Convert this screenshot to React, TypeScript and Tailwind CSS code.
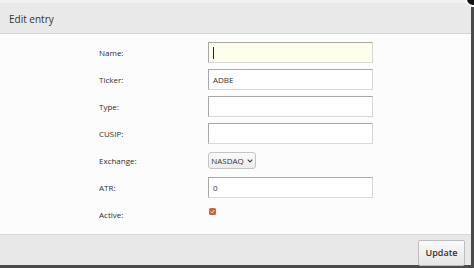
import React from 'react';

const rows = [
  { label: 'Name:', kind: 'text', value: '', focus: true },
  { label: 'Ticker:', kind: 'text', value: 'ADBE' },
  { label: 'Type:', kind: 'text', value: '' },
  { label: 'CUSIP:', kind: 'text', value: '' },
  { label: 'Exchange:', kind: 'select', value: 'NASDAQ' },
  { label: 'ATR:', kind: 'text', value: '0' },
  { label: 'Active:', kind: 'check', value: '' },
];

export default function App() {
  return (
    <div className="relative w-[474px] h-[268px] overflow-hidden bg-[#4a4a4a] font-['Open_Sans',sans-serif]">
      <div className="flex flex-col w-[471px] h-[265px] bg-[#fcfcfc]">
        <div className="h-[3px] bg-[#f1f1f1]" />
        {/* header */}
        <div className="h-[31px] flex items-center px-[9px] pt-[2px] bg-[#e9e9ea] border-b border-[#d4d4d4]">
          <span className="text-[10px] text-[#333]">Edit entry</span>
        </div>

        {/* body */}
        <div className="flex-1 flex flex-col pt-[5px] pl-[99px]">
          {rows.map((r) => (
            <div key={r.label} className="h-[27px] flex items-center">
              <span className="w-[109px] text-[8px] text-[#2e2e2e]">{r.label}</span>
              {r.kind === 'text' && (
                <div
                  className={`w-[165px] h-[21px] flex items-center pl-[4px] border border-[#d8d8d8] border-t-[#a8a8a8] border-l-[#a8a8a8] ${r.focus ? 'bg-[#fefeea]' : 'bg-white'}`}
                >
                  {r.focus ? (
                    <span className="w-px h-[12px] bg-[#222]" />
                  ) : (
                    <span className="text-[8px] text-[#333]">{r.value}</span>
                  )}
                </div>
              )}
              {r.kind === 'select' && (
                <div className="w-[48px] h-[17px] flex items-center justify-center gap-[3px] rounded-[3px] border border-[#c4c4c4] bg-gradient-to-b from-[#fbfbfb] to-[#ececec]">
                  <span className="text-[8px] text-[#333]">{r.value}</span>
                  <svg width="6" height="4" viewBox="0 0 6 4">
                    <path d="M0.7 0.7 L3 3 L5.3 0.7" fill="none" stroke="#444" strokeWidth="1.1" />
                  </svg>
                </div>
              )}
              {r.kind === 'check' && (
                <div className="w-[7px] h-[7px] -mt-[6px] ml-[1px] rounded-[1.5px] bg-[#c8653c] flex items-center justify-center">
                  <svg width="5" height="5" viewBox="0 0 5 5">
                    <path d="M0.8 2.6 L2 3.8 L4.2 1.2" fill="none" stroke="#fff" strokeWidth="0.9" />
                  </svg>
                </div>
              )}
            </div>
          ))}
        </div>

        {/* footer */}
        <div className="h-[31px] flex items-end justify-end pr-[6px] bg-[#e8e8e8] border-t border-[#d8d8d8]">
          <button className="w-[47px] h-[26px] -mb-px rounded-[2px] border border-[#bdbdbd] bg-gradient-to-b from-[#fafafa] to-[#e6e6e6] text-[9px] font-semibold text-[#333]">
            Update
          </button>
        </div>
      </div>

      {/* close button, mostly off-screen */}
      <div className="absolute -top-[9px] -right-[7px] w-[16px] h-[16px] rounded-full bg-[#111] border-2 border-white" />
    </div>
  );
}
